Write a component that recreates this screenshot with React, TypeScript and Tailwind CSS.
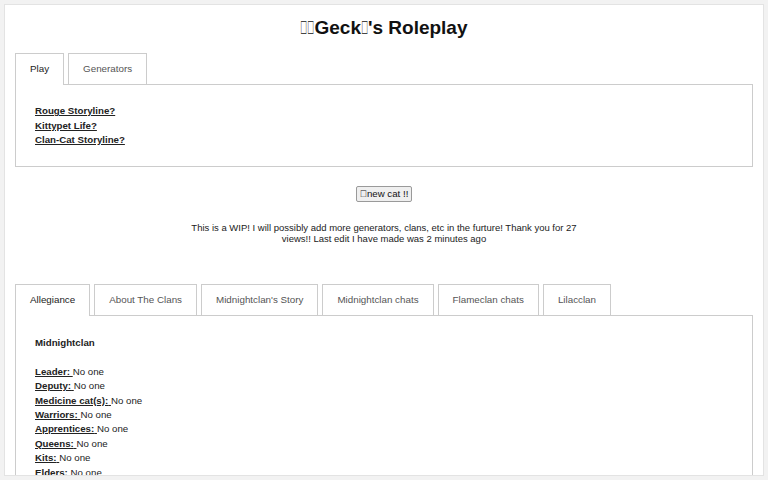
import React, { useState } from "react";

const font = { fontFamily: '"Liberation Sans", Arial, sans-serif' };

// the reference shows missing-glyph boxes where the emoji were
const box = "\uE000";

const Tofu = () => (
  <span className="inline-block w-[7px]">
    <span className="inline-block origin-left scale-x-50">{box}</span>
  </span>
);

const topTabs = ["Play", "Generators"];
const clanTabs = [
  "Allegiance",
  "About The Clans",
  "Midnightclan's Story",
  "Midnightclan chats",
  "Flameclan chats",
  "Lilacclan",
];

const ranks = [
  "Leader:",
  "Deputy:",
  "Medicine cat(s):",
  "Warriors:",
  "Apprentices:",
  "Queens:",
  "Kits:",
  "Elders:",
];

const TabBar = ({
  tabs,
  active,
  onPick,
}: {
  tabs: string[];
  active: number;
  onPick: (i: number) => void;
}) => (
  <div className="flex items-end gap-[4px]">
    {tabs.map((t, i) => (
      <button
        key={t}
        type="button"
        onClick={() => onPick(i)}
        className={
          i === active
            ? "relative z-10 -mb-px h-[32px] border border-b-0 border-[#cccccc] bg-white px-[14px] pb-px text-[9.8px] text-[#222]"
            : "h-[31px] border border-b-0 border-[#cccccc] bg-white px-[14px] text-[9.8px] text-[#555]"
        }
      >
        {t}
      </button>
    ))}
  </div>
);

export default function App() {
  const [top, setTop] = useState(0);
  const [clan, setClan] = useState(0);

  return (
    <div className="h-[480px] overflow-hidden bg-[#f2f2f2] p-1" style={font}>
      <div className="h-[472px] overflow-hidden border border-[#e3e3e3] bg-white px-[10px]">
        <h1 className="pt-[12px] text-center text-[19px] font-bold leading-[22px] text-[#111]">
          <Tofu />
          <Tofu />
          Geck
          <Tofu />
          's Roleplay
        </h1>

        <div className="mt-[14px]">
          <TabBar tabs={topTabs} active={top} onPick={setTop} />
          <div className="h-[83px] border border-[#cccccc] px-[19px] pt-[19px] text-[9.7px] leading-[14.5px]">
            <a href="#" className="block w-fit font-bold text-[#222] underline">
              Rouge Storyline?
            </a>
            <a href="#" className="block w-fit font-bold text-[#222] underline">
              Kittypet Life?
            </a>
            <a href="#" className="block w-fit font-bold text-[#222] underline">
              Clan-Cat Storyline?
            </a>
          </div>
        </div>

        <div className="mt-[19px] flex justify-center">
          <button
            type="button"
            className="h-[16px] rounded-[2px] border border-[#9a9a9a] bg-[#efefef] px-[3px] text-[9.7px] leading-[14px] text-[#111]"
          >
            {box}new cat !!
          </button>
        </div>

        <p className="mx-auto mt-[20px] w-[400px] text-center text-[9.5px] leading-[11px] text-[#222]">
          This is a WIP! I will possibly add more generators, clans, etc in the furture! Thank you for 27 views!! Last edit I have made was 2 minutes ago
        </p>

        <div className="mt-[40px]">
          <TabBar tabs={clanTabs} active={clan} onPick={setClan} />
          <div className="h-[200px] border border-[#cccccc] px-[19px] pt-[20px] text-[9.7px] leading-[14.4px] text-[#222]">
            <p className="font-bold">Midnightclan</p>
            <br />
            {ranks.map((r) => (
              <p key={r}>
                <span className="font-bold underline">{r} </span>
                No one
              </p>
            ))}
          </div>
        </div>
      </div>
    </div>
  );
}
